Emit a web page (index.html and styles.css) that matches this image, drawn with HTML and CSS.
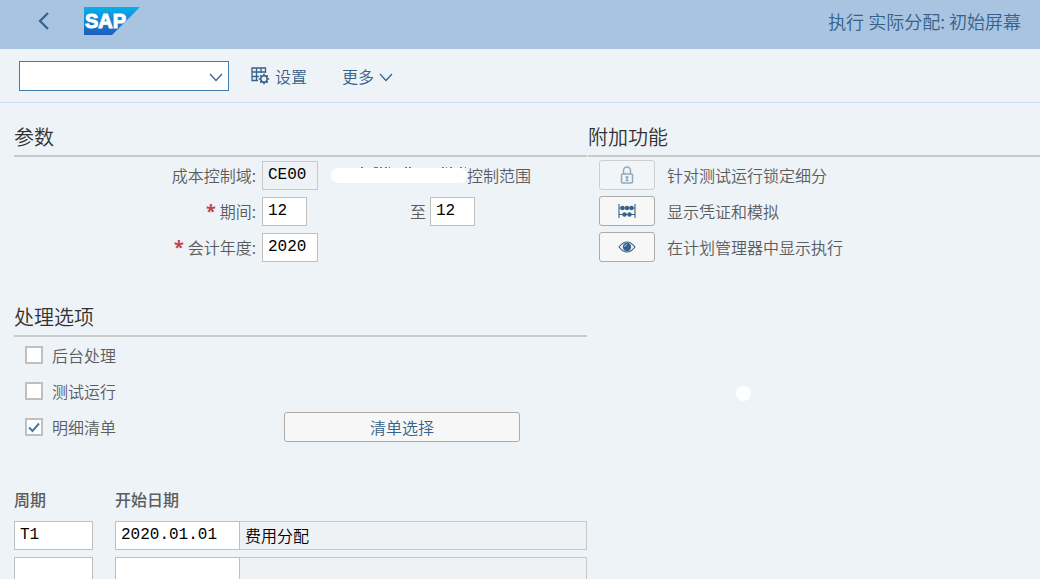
FILE: index.html
```
<!DOCTYPE html>
<html lang="zh-CN">
<head>
    <meta charset="UTF-8">
    <meta name="viewport" content="width=device-width, initial-scale=1.0">
    <title>执行 实际分配: 初始屏幕</title>
    <link rel="stylesheet" href="styles.css">
</head>
<body>
    <header class="header">
        <button class="back-btn" type="button" aria-label="返回">
            <svg width="12" height="20" viewBox="0 0 12 20"><path d="M10 2 L2 10 L10 18" fill="none" stroke="#36618a" stroke-width="2.2"/></svg>
        </button>
        <a class="logo" href="#" aria-label="SAP">
            <svg width="56" height="28" viewBox="0 0 56 28">
                <defs>
                    <linearGradient id="sap" x1="0" y1="0" x2="0" y2="1">
                        <stop offset="0" stop-color="#06b2ea"/>
                        <stop offset="0.5" stop-color="#1583d2"/>
                        <stop offset="1" stop-color="#1f5dbb"/>
                    </linearGradient>
                </defs>
                <path d="M0 0 H56 L28 28 H0 Z" fill="url(#sap)"/>
                <text class="logo-text" x="1" y="21">SAP</text>
            </svg>
        </a>
        <h1>执行 实际分配: 初始屏幕</h1>
    </header>

    <nav class="toolbar">
        <select class="command" aria-label="命令">
            <option></option>
        </select>
        <button class="tool-btn settings" type="button">
            <svg width="19" height="19" viewBox="0 0 19 19" fill="none" stroke="#36618a">
                <path d="M7 14.5 H1 V2 H14.5 V7 M1 6 H14.5 M1 10.5 H8 M5.5 2 V14.5 M10 2 V7" stroke-width="1.3"/>
                <circle cx="13" cy="13" r="3.2" stroke-width="1.5"/>
                <path d="M13 7.8 V9.8 M13 16.2 V18.2 M7.8 13 H9.8 M16.2 13 H18.2 M9.3 9.3 L10.7 10.7 M15.3 15.3 L16.7 16.7 M9.3 16.7 L10.7 15.3 M15.3 10.7 L16.7 9.3" stroke-width="1.7"/>
            </svg>
            设置
        </button>
        <button class="tool-btn more" type="button">
            更多
            <svg width="14" height="12" viewBox="0 0 14 12"><path d="M1 4 L7 10.5 L13 4" fill="none" stroke="#36618a" stroke-width="1.2"/></svg>
        </button>
    </nav>

    <main class="content">
        <div class="column">
            <section>
                <h2>参数</h2>
                <div class="row">
                    <label class="label" for="area">成本控制域:</label>
                    <input class="field medium" id="area" type="text" value="CE00" readonly>
                    <span class="description">
                        <svg width="136" height="18" viewBox="0 0 136 18">
                            <rect x="0" y="2" width="136" height="15" rx="7" fill="#fff"/>
                            <path d="M30 1.5 h2 M43 1.5 h4 M49 1.5 h2 M54 1.5 h2 M58 1.5 h1 M74 1.5 h2 M78 1.5 h2 M111 1.5 h2 M115 1.5 h1 M119 1.5 h2 M129 1.5 h2 M134 1.5 h1" stroke="#777"/>
                        </svg>控制范围
                    </span>
                </div>
                <div class="row">
                    <label class="label" for="from"><b class="required">*</b>期间:</label>
                    <input class="field short" id="from" type="text" value="12">
                    <label class="to" for="to">至</label>
                    <input class="field short" id="to" type="text" value="12">
                </div>
                <div class="row">
                    <label class="label" for="year"><b class="required">*</b>会计年度:</label>
                    <input class="field medium" id="year" type="text" value="2020">
                </div>
            </section>

            <section>
                <h2>处理选项</h2>
                <div class="row">
                    <label class="check"><input type="checkbox">后台处理</label>
                </div>
                <div class="row">
                    <label class="check"><input type="checkbox">测试运行</label>
                </div>
                <div class="row">
                    <label class="check"><input type="checkbox" checked>明细清单</label>
                    <button class="btn list-btn" type="button">清单选择</button>
                </div>
            </section>

            <table class="cycles">
                <thead>
                    <tr>
                        <th class="col-cycle">周期</th>
                        <th class="col-date">开始日期</th>
                        <th></th>
                    </tr>
                </thead>
                <tbody>
                    <tr>
                        <td class="col-cycle"><input class="field" type="text" value="T1" aria-label="周期"></td>
                        <td><input class="field" type="text" value="2020.01.01" aria-label="开始日期"></td>
                        <td><input class="field text" type="text" value="费用分配" aria-label="文本" readonly></td>
                    </tr>
                    <tr>
                        <td class="col-cycle"><input class="field" type="text" aria-label="周期"></td>
                        <td><input class="field" type="text" aria-label="开始日期"></td>
                        <td><input class="field text" type="text" aria-label="文本" readonly></td>
                    </tr>
                </tbody>
            </table>
        </div>

        <div class="column">
            <section>
                <h2>附加功能</h2>
                <div class="row extra">
                    <button class="btn icon-btn" id="lock" type="button" disabled>
                        <svg width="14" height="18" viewBox="0 0 14 18" fill="none" stroke="#36618a" stroke-width="1.5">
                            <rect x="1.5" y="8" width="11" height="9" rx="1"/>
                            <path d="M3.5 8 V4.5 a3.5 3.5 0 0 1 7 0 V8"/>
                            <path d="M7 10 V15 M5.5 11.2 H8.5 M5.5 14.5 H8.5"/>
                        </svg>
                    </button>
                    <label for="lock">针对测试运行锁定细分</label>
                </div>
                <div class="row extra">
                    <button class="btn icon-btn" id="simulate" type="button">
                        <svg width="18" height="14" viewBox="0 0 18 14" fill="#36618a" stroke="#36618a">
                            <path d="M1 0 V14 M17 0 V14 M1 4 H17 M1 10.5 H17" stroke-width="1.1"/>
                            <g stroke="none">
                                <circle cx="4.5" cy="4" r="2.2"/><circle cx="9" cy="4" r="2.2"/><circle cx="13.5" cy="4" r="2.2"/>
                                <circle cx="6.5" cy="10.5" r="2.2"/><circle cx="11.5" cy="10.5" r="2.2"/>
                            </g>
                        </svg>
                    </button>
                    <label for="simulate">显示凭证和模拟</label>
                </div>
                <div class="row extra">
                    <button class="btn icon-btn" id="planner" type="button">
                        <svg width="18" height="12" viewBox="0 0 18 12">
                            <path d="M1 6 Q9 -4 17 6 Q9 16 1 6 Z" fill="none" stroke="#36618a" stroke-width="1.2"/>
                            <circle cx="9" cy="6" r="4.2" fill="#36618a"/>
                            <path d="M6.6 5.6 a2.4 2.4 0 0 1 2 -2" fill="none" stroke="#fff" stroke-width="0.8"/>
                        </svg>
                    </button>
                    <label for="planner">在计划管理器中显示执行</label>
                </div>
            </section>
            <div class="dot"></div>
        </div>
    </main>
</body>
</html>
```
FILE: styles.css
```
* {
    box-sizing: border-box;
}
body {
    margin: 0;
    height: 100vh;
    overflow: hidden;
    background: #eef3f8;
    color: #5c5c5c;
    font-family: "Noto Sans CJK SC", sans-serif;
    font-size: 16px;
    font-weight: 350;
    line-height: 24px;
}
button, input, select {
    font: inherit;
    margin: 0;
}
svg {
    display: block;
    flex: none;
}

/* header */
.header {
    display: flex;
    align-items: center;
    height: 49px;
    padding: 0 19px 7px 33px;
    background: #a9c4e0;
}
.back-btn {
    display: flex;
    padding: 0 5px;
    border: none;
    background: none;
}
.logo {
    margin-left: 29px;
}
.logo-text {
    font-family: "Liberation Sans", Arial, sans-serif;
    font-size: 20px;
    font-weight: bold;
    fill: #fff;
    stroke: #fff;
}
.header h1 {
    margin: 0 0 0 auto;
    color: #36618a;
    font-size: 18px;
    font-weight: 350;
}

/* toolbar */
.toolbar {
    display: flex;
    align-items: center;
    height: 54px;
    padding-left: 19px;
    border-bottom: 1px solid #c9dcee;
    color: #36618a;
}
.command {
    appearance: none;
    width: 210px;
    height: 30px;
    border: 1px solid #427cac;
    border-radius: 0;
    background: #fff url("data:image/svg+xml,%3Csvg xmlns='http://www.w3.org/2000/svg' width='14' height='12'%3E%3Cpath d='M1 4 L7 10.5 L13 4' fill='none' stroke='%2336618a' stroke-width='1.2'/%3E%3C/svg%3E") no-repeat right 5px center;
}
.tool-btn {
    display: flex;
    align-items: center;
    gap: 5px;
    padding: 0;
    border: none;
    background: none;
    color: inherit;
}
.settings {
    margin-left: 22px;
}
.more {
    margin-left: 35px;
}

/* content */
.content {
    display: grid;
    grid-template-columns: 573fr 452fr;
    gap: 1px;
    padding-left: 14px;
}
section {
    margin-top: 16px;
}
section + section {
    margin-top: 34px;
}
h2 {
    margin: 0;
    border-bottom: 2px solid #c8c9cb;
    color: #333;
    font-size: 20px;
    font-weight: 350;
    line-height: 36px;
}
.row {
    display: flex;
    align-items: center;
    height: 36px;
}
.label {
    display: flex;
    justify-content: flex-end;
    gap: 4px;
    width: 242px;
    margin-right: 6px;
}
.required {
    color: #c14646;
    font-family: "Noto Sans", sans-serif;
    font-size: 18px;
    font-weight: bold;
}
.field {
    display: block;
    width: 100%;
    height: 29px;
    padding: 0 5px;
    border: 1px solid #bfbfbf;
    border-radius: 0;
    background: #fff;
    color: #000;
    font-family: "Liberation Mono", "Noto Sans CJK SC", monospace;
    font-weight: normal;
}
.field:read-only {
    background: #eff2f4;
    border-color: #c6c8ca;
}
.field.text {
    border-left: none;
    font-family: "Noto Sans CJK SC", sans-serif;
    font-weight: 350;
}
.medium {
    width: 56px;
}
.short {
    width: 45px;
}
.description {
    display: flex;
    align-items: center;
    margin-left: 13px;
}
.to {
    margin: 0 4px 0 103px;
}

.check {
    display: flex;
    align-items: center;
    gap: 9px;
    width: 259px;
    margin-left: 11px;
}
.check input {
    appearance: none;
    width: 18px;
    height: 18px;
    border: 2px solid #bfbfbf;
    background: #fff;
}
.check input:checked {
    background: #fff url("data:image/svg+xml,%3Csvg xmlns='http://www.w3.org/2000/svg' width='12' height='11'%3E%3Cpath d='M1 5.5 L4.5 9 L11 1.5' fill='none' stroke='%23427cac' stroke-width='2'/%3E%3C/svg%3E") no-repeat center;
}
.btn {
    display: flex;
    align-items: center;
    justify-content: center;
    height: 30px;
    padding: 0;
    border: 1px solid #ababab;
    border-radius: 3px;
    background: #f7f7f7;
    color: #36618a;
}
.btn:disabled {
    opacity: 0.5;
}
.list-btn {
    width: 236px;
}
.icon-btn {
    width: 56px;
}
.extra {
    gap: 12px;
    padding-left: 11px;
}
.dot {
    width: 15px;
    height: 15px;
    margin: 121px 0 0 148px;
    border-radius: 50%;
    background: #fff;
}

/* cycle list */
.cycles {
    width: 100%;
    margin-top: 36px;
    border-collapse: collapse;
    table-layout: fixed;
}
.cycles tr {
    height: 36px;
}
.cycles th, .cycles td {
    padding: 0;
    text-align: left;
}
.cycles th {
    font-weight: 500;
}
.cycles .col-cycle {
    width: 101px;
    padding-right: 22px;
}
.col-date {
    width: 125px;
}
```
